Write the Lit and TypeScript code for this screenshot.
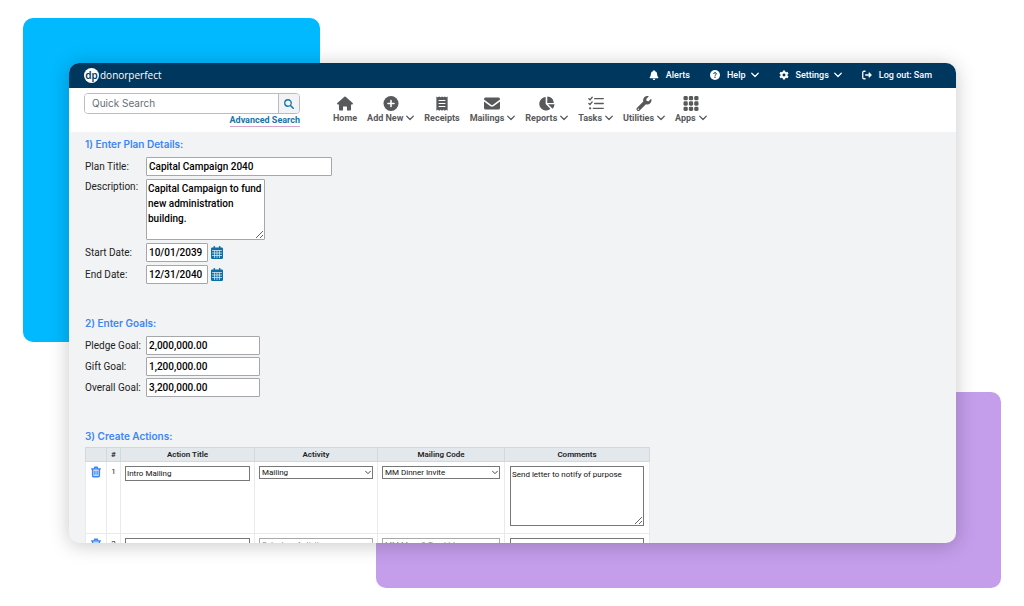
import { LitElement, html, svg, css, nothing, type SVGTemplateResult } from "lit";
import { customElement, property } from "lit/decorators.js";

const icons: Record<string, { box: string; art: SVGTemplateResult }> = {
  bell: {
    box: "0 0 448 512",
    art: svg`<path fill="currentColor" d="M224 512c35.32 0 63.97-28.65 63.97-64H160.03c0 35.35 28.65 64 63.97 64zm215.39-149.71c-19.32-20.76-55.47-51.99-55.47-154.29 0-77.7-54.48-139.9-127.94-155.16V32c0-17.67-14.32-32-31.98-32s-31.98 14.33-31.98 32v20.84C118.56 68.1 64.08 130.3 64.08 208c0 102.3-36.15 133.53-55.47 154.29-6 6.45-8.66 14.16-8.61 21.71.11 16.4 12.98 32 32.1 32h383.8c19.12 0 32-15.6 32.1-32 .05-7.55-2.61-15.27-8.61-21.71z"/>`,
  },
  help: {
    box: "0 0 16 16",
    art: svg`<circle cx="8" cy="8" r="8" fill="currentColor"/><path d="M5.800 6.300C5.900 4.900 6.800 4.200 8 4.200s2.200.7 2.200 1.900C10.200 7.700 8 7.500 8 9.300" fill="none" stroke="#00375f" stroke-width="1.600"/><circle cx="8" cy="11.500" r="1.100" fill="#00375f"/>`,
  },
  gear: {
    box: "0 0 24 24",
    art: svg`<path fill="currentColor" fill-rule="evenodd" d="M9.500 1h5l.7 3.400 1.900 1.100 3.300-1.200 2.500 4.400-2.600 2.200v2.200l2.600 2.200-2.500 4.400-3.300-1.200-1.900 1.100-.7 3.400h-5l-.7-3.400-1.900-1.100-3.300 1.200-2.500-4.400 2.600-2.200v-2.200L1.100 8.700l2.500-4.400 3.300 1.200 1.900-1.100zM12 8.500a3.500 3.500 0 1 0 0 7 3.500 3.500 0 0 0 0-7z"/>`,
  },
  logout: {
    box: "0 0 20 18",
    art: svg`<path d="M7 1.500H4A2.500 2.500 0 0 0 1.500 4v10A2.500 2.500 0 0 0 4 16.500h3M6.500 9H18M13.500 4.500 18 9l-4.500 4.500" fill="none" stroke="currentColor" stroke-width="2.600"/>`,
  },
  chevron: {
    box: "0 0 16 10",
    art: svg`<path d="M1.500 1.500 8 8l6.500-6.500" fill="none" stroke="currentColor" stroke-width="2.400" stroke-linecap="round" stroke-linejoin="round"/>`,
  },
  search: {
    box: "0 0 20 20",
    art: svg`<circle cx="8" cy="8" r="6.500" fill="none" stroke="currentColor" stroke-width="2.600"/><path d="m13 13 5.500 5.500" stroke="currentColor" stroke-width="3" stroke-linecap="round"/>`,
  },
  home: {
    box: "0 0 18 16",
    art: svg`<path fill="currentColor" d="M8.300.4a1.100 1.100 0 0 1 1.400 0l7.900 7.100c.7.600.3 1.700-.6 1.700h-1.200v5.600c0 .7-.5 1.200-1.200 1.200h-3.400v-4.600H6.800V16H3.400c-.7 0-1.200-.5-1.200-1.200V9.200H1c-.9 0-1.300-1.100-.6-1.700z"/>`,
  },
  add: {
    box: "0 0 16 16",
    art: svg`<circle cx="8" cy="8" r="8" fill="currentColor"/><path d="M8 4.800v6.400M4.800 8h6.400" stroke="#fff" stroke-width="1.700" stroke-linecap="round"/>`,
  },
  receipt: {
    box: "0 0 12 16",
    art: svg`<path fill="currentColor" d="M0 .4 1.500 1.300 3 .4l1.500.9L6 .4l1.500.9L9 .4l1.500.9L12 .4v15.200l-1.500-.9-1.500.9-1.500-.9-1.500.9-1.500-.9-1.500.9-1.500-.9-1.500.9z"/><path d="M2.400 4.900h7.200M2.400 8h7.200M2.400 11.100h7.200" stroke="#fff" stroke-width="1.100"/>`,
  },
  mail: {
    box: "0 0 16 12",
    art: svg`<path fill="currentColor" d="M1.500 0h13A1.500 1.500 0 0 1 16 1.500v.6L9 7.300a1.700 1.700 0 0 1-2 0L0 2.100v-.6A1.500 1.500 0 0 1 1.500 0zM0 4l6.100 4.500a3.200 3.200 0 0 0 3.800 0L16 4v6.500a1.500 1.500 0 0 1-1.500 1.500h-13A1.500 1.500 0 0 1 0 10.500z"/>`,
  },
  pie: {
    box: "0 0 18 16",
    art: svg`<path fill="currentColor" d="M7.500.8v7.700l5.300 5.400A7.500 7.500 0 1 1 7.500.8zM9.300 0a7.500 7.500 0 0 1 7.400 7.300H9.300zM10.200 8.900h7.300a7.300 7.300 0 0 1-2.300 4.900z"/>`,
  },
  tasks: {
    box: "0 0 18 16",
    art: svg`<path d="m1 2.700 1.300 1.200L4.700 1M1 7.900l1.300 1.200 2.400-2.900M7.500 2.600h9.700M7.500 8h9.700M6 13.400h11.200" fill="none" stroke="currentColor" stroke-width="1.500" stroke-linecap="round"/><circle cx="2.400" cy="13.400" r="1.300" fill="currentColor"/>`,
  },
  wrench: {
    box: "0 0 512 512",
    art: svg`<path fill="currentColor" d="M507.73 109.1c-2.24-9.03-13.54-12.09-20.12-5.51l-74.36 74.36-67.88-11.31-11.31-67.88 74.36-74.36c6.62-6.62 3.43-17.9-5.66-20.16-47.38-11.74-99.55.91-136.58 37.93-39.64 39.64-50.55 97.1-34.05 147.2L18.74 402.76c-24.99 24.99-24.99 65.51 0 90.5 24.99 24.99 65.51 24.99 90.5 0l213.21-213.21c50.12 16.71 107.47 5.68 147.37-34.22 37.07-37.07 49.7-89.32 37.91-136.73zM64 472c-13.25 0-24-10.75-24-24 0-13.26 10.75-24 24-24s24 10.74 24 24c0 13.25-10.75 24-24 24z"/>`,
  },
  grid: {
    box: "0 0 14 14",
    art: svg`${[0, 5, 10].flatMap((y) => [0, 5, 10].map((x) => svg`<rect x=${x} y=${y} width="4" height="4" rx="1.300" fill="currentColor"/>`))}`,
  },
  calendar: {
    box: "0 0 12 13",
    art: svg`<path fill="currentColor" d="M1.300 1.500h1.200V.8a.8.8 0 0 1 1.600 0v.7h3.800V.8a.8.8 0 0 1 1.600 0v.7h1.200A1.300 1.300 0 0 1 12 2.800v8.900a1.300 1.300 0 0 1-1.300 1.300H1.300A1.300 1.300 0 0 1 0 11.700V2.800a1.300 1.300 0 0 1 1.300-1.300z"/><path d="M1 4.500h10M1 7h10M1 9.500h10M3.600 4.300V12M6 4.300V12M8.400 4.300V12" stroke="#f2f3f5" stroke-width=".7"/>`,
  },
  trash: {
    box: "0 0 20 22",
    art: svg`<path d="M3.200 5h13.600v15H3.200z" fill="currentColor" opacity=".3"/><path d="M1.200 4.800h17.600M6.500 4.300 7.500 1.500h5l1 2.800M3.200 5v13.500a2 2 0 0 0 2 2h9.600a2 2 0 0 0 2-2V5" fill="none" stroke="currentColor" stroke-width="2.800" stroke-linecap="round"/><path d="M7.200 9v7.500M10 9v7.500M12.800 9v7.500" stroke="currentColor" stroke-width="1.500"/>`,
  },
};

@customElement("dp-icon")
class DpIcon extends LitElement {
  @property() name = "";
  static styles = css`
    :host { display: inline-flex; flex: none; width: 10px; height: 10px; }
    svg { width: 100%; height: 100%; display: block; }
  `;
  render() {
    const icon = icons[this.name];
    return html`<svg viewBox=${icon.box} aria-hidden="true">${icon.art}</svg>`;
  }
}

interface NavItem { label: string; icon: string; menu?: boolean; }

const utilityLinks: NavItem[] = [
  { label: "Alerts", icon: "bell" },
  { label: "Help", icon: "help", menu: true },
  { label: "Settings", icon: "gear", menu: true },
  { label: "Log out: Sam", icon: "logout" },
];

const mainLinks: NavItem[] = [
  { label: "Home", icon: "home" },
  { label: "Add New", icon: "add", menu: true },
  { label: "Receipts", icon: "receipt" },
  { label: "Mailings", icon: "mail", menu: true },
  { label: "Reports", icon: "pie", menu: true },
  { label: "Tasks", icon: "tasks", menu: true },
  { label: "Utilities", icon: "wrench", menu: true },
  { label: "Apps", icon: "grid", menu: true },
];

const dates = [
  { id: "start", label: "Start Date:", value: "10/01/2039" },
  { id: "end", label: "End Date:", value: "12/31/2040" },
];

const goals = [
  { id: "pledge", label: "Pledge Goal:", value: "2,000,000.00" },
  { id: "gift", label: "Gift Goal:", value: "1,200,000.00" },
  { id: "overall", label: "Overall Goal:", value: "3,200,000.00" },
];

const actions = [
  { title: "Intro Mailing", activity: "Mailing", code: "MM Dinner Invite", comments: "Send letter to notify of purpose", empty: false },
  { title: "", activity: "Select an Activity", code: "MM Mem & Trust Ltr", comments: "", empty: true },
];

@customElement("app-root")
class AppRoot extends LitElement {
  static styles = css`
    :host {
      display: block;
      position: relative;
      box-sizing: border-box;
      height: 100vh;
      min-height: 320px;
      padding: 63px 68px 63px 69px;
      background: #fff;
      overflow: hidden;
      font: 10px/15px Roboto, Inter, sans-serif;
      color: #222;
    }
    * { box-sizing: border-box; }
    input, textarea, select, button { font: inherit; color: inherit; margin: 0; border-radius: 0; }
    .blob { position: absolute; border-radius: 10px; }
    .blue { left: 23px; top: 18px; width: 29%; bottom: 264px; background: #00b9ff; }
    .violet { right: 23px; bottom: 18px; width: 61%; height: 196px; background: #c49deb; }
    .window {
      position: relative;
      display: flex;
      flex-direction: column;
      height: 100%;
      border-radius: 10px;
      overflow: hidden;
      background: #f2f3f5;
      box-shadow: 0 2px 20px rgba(0, 0, 0, 0.22);
    }
    a { color: inherit; text-decoration: none; }
    .topbar {
      flex: none;
      display: flex;
      align-items: center;
      justify-content: space-between;
      height: 25px;
      padding: 0 24px 1px 15px;
      background: #00375f;
      color: #fff;
    }
    .brand { display: flex; align-items: center; gap: 1px; font: 500 10px/14px "Open Sans", "Noto Sans", sans-serif; }
    .badge {
      width: 15px; height: 15px; border-radius: 50%;
      background: #fff; color: #00375f;
      display: flex; align-items: center; justify-content: center;
      font: 600 10px/12px "Noto Sans", sans-serif;
    }
    .utility { display: flex; gap: 20px; font-size: 9px; font-weight: 500; }
    .utility a { display: flex; align-items: center; gap: 7px; }
    .chev { width: 8px; height: 6px; }
    .utility .chev { margin-left: -2px; }
    .navbar {
      flex: none;
      display: flex;
      gap: 33px;
      height: 44px;
      padding: 5px 14px 0 15px;
      background: #fff;
    }
    .search { flex: none; width: 216px; display: flex; flex-direction: column; }
    .searchbox { display: flex; height: 21px; border: 1px solid #b9bcc0; border-radius: 4px; overflow: hidden; }
    .searchbox input { flex: 1; min-width: 0; border: 0; padding: 0 7px; background: #fff; outline: 0; font-family: Inter, sans-serif; }
    .searchbox input::placeholder { color: #6a6e73; opacity: 1; }
    .searchbox button {
      width: 21px; padding: 0; border: 0; border-left: 1px solid #b9bcc0;
      background: #f2f3f5; color: #1874a8;
      display: flex; align-items: center; justify-content: center;
    }
    .advanced {
      align-self: flex-end;
      font-size: 9px; line-height: 12px; font-weight: 700;
      color: #1874a8; border-bottom: 1px solid #d6a5cd;
    }
    .main { display: flex; align-items: flex-start; gap: 10px; padding-top: 3px; color: #58595b; }
    .main a { display: flex; flex-direction: column; align-items: center; gap: 1px; font-size: 9px; line-height: 12px; font-weight: 700; white-space: nowrap; }
    .main a > dp-icon { width: 16px; height: 15px; }
    .caption { display: flex; align-items: center; gap: 3px; }
    .content { flex: 1; min-height: 0; overflow: hidden; padding: 4px 16px 0; }
    h2 { margin: 0; font: 600 10px/16px Inter, sans-serif; color: #3d86f5; }
    .fields {
      display: grid;
      grid-template-columns: 61px 1fr;
      align-items: center;
      justify-items: start;
      margin: 5px 0 31px;
      white-space: nowrap;
    }
    .fields label { line-height: 15px; }
    .fields input, .fields textarea {
      border: 1px solid #a5a7aa; border-radius: 1px; background: #fff; color: #000;
      padding: 0 2px; height: 19px; outline: 0; font-weight: 500;
    }
    .plan { row-gap: 3px; }
    .goals { row-gap: 2px; }
    .fields .desc { height: 61px; width: 119px; padding: 1px; white-space: pre-wrap; display: block; resize: both; }
    .top { align-self: start; }
    .fields .title { width: 186px; }
    .fields .date { width: 62px; }
    .fields .goal { width: 114px; }
    .dategroup { display: flex; align-items: center; gap: 3px; }
    .dategroup button { border: 0; padding: 0; background: none; color: #0a70a8; display: flex; }
    .dategroup dp-icon { width: 12px; height: 13px; }
    .actions { border-collapse: collapse; table-layout: fixed; width: 565px; margin-top: 3px; font-size: 8px; line-height: 12px; }
    .c1 { width: 21px; } .c2 { width: 14px; } .c3 { width: 134px; } .c4 { width: 123px; } .c5 { width: 127px; }
    th { height: 14px; padding: 0; background: #e3e8ec; border: 1px solid #d3d8dc; font-weight: 600; color: #222; }
    td { height: 72px; padding: 4px 4px 0; background: #fff; border: 1px solid #e8ebee; vertical-align: top; }
    td.slim { padding: 4px 0 0; text-align: center; }
    .slim button { border: 0; padding: 0; background: none; color: #3d86f5; display: inline-flex; }
    .slim dp-icon { width: 10px; height: 12px; }
    .cell { display: block; width: 100%; border: 1px solid #777; background: #fff; color: #111; outline: 0; }
    input.cell { height: 15px; padding: 0 1px; }
    .pick { position: relative; display: block; }
    select.cell { height: 13px; appearance: none; padding: 0 14px 0 2px; line-height: 11px; }
    .pick dp-icon { position: absolute; right: 2px; top: 4px; width: 6px; height: 5px; color: #333; pointer-events: none; }
    .dim select { color: #8a8a8a; border-color: #aaa; }
    td.note { padding: 4px 5px 0; }
    textarea.cell { height: 60px; padding: 2px 1px; resize: both; }
  `;

  private chevron(menu?: boolean) {
    return menu ? html`<dp-icon class="chev" name="chevron"></dp-icon>` : nothing;
  }

  private picker(label: string, value: string, dim: boolean) {
    return html`<span class="pick ${dim ? "dim" : ""}">
      <select class="cell" aria-label=${label}><option>${value}</option></select>
      <dp-icon name="chevron"></dp-icon>
    </span>`;
  }

  render() {
    return html`
      <div class="blob blue"></div>
      <div class="blob violet"></div>
      <div class="window">
        <header class="topbar">
          <a class="brand" href="#"><span class="badge">dp</span><span>donorperfect</span></a>
          <nav class="utility" aria-label="Account">
            ${utilityLinks.map((l) => html`<a href="#"><dp-icon name=${l.icon}></dp-icon><span>${l.label}</span>${this.chevron(l.menu)}</a>`)}
          </nav>
        </header>
        <div class="navbar">
          <form class="search" role="search">
            <div class="searchbox">
              <input type="text" placeholder="Quick Search" aria-label="Quick Search" />
              <button type="button" aria-label="Search"><dp-icon name="search"></dp-icon></button>
            </div>
            <a class="advanced" href="#">Advanced Search</a>
          </form>
          <nav class="main" aria-label="Main">
            ${mainLinks.map((l) => html`<a href="#"><dp-icon name=${l.icon}></dp-icon><span class="caption">${l.label}${this.chevron(l.menu)}</span></a>`)}
          </nav>
        </div>
        <main class="content">
          <h2>1) Enter Plan Details:</h2>
          <div class="fields plan">
            <label for="title">Plan Title:</label>
            <input id="title" class="title" type="text" value="Capital Campaign 2040" />
            <label class="top" for="desc">Description:</label>
            <textarea id="desc" class="desc" .value=${"Capital Campaign to fund new administration building."}></textarea>
            ${dates.map((d) => html`
              <label for=${d.id}>${d.label}</label>
              <div class="dategroup">
                <input id=${d.id} class="date" type="text" value=${d.value} />
                <button type="button" aria-label="Pick date"><dp-icon name="calendar"></dp-icon></button>
              </div>`)}
          </div>
          <h2>2) Enter Goals:</h2>
          <div class="fields goals">
            ${goals.map((g) => html`
              <label for=${g.id}>${g.label}</label>
              <input id=${g.id} class="goal" type="text" value=${g.value} />`)}
          </div>
          <h2>3) Create Actions:</h2>
          <table class="actions">
            <colgroup><col class="c1" /><col class="c2" /><col class="c3" /><col class="c4" /><col class="c5" /><col /></colgroup>
            <thead>
              <tr><th></th><th>#</th><th>Action Title</th><th>Activity</th><th>Mailing Code</th><th>Comments</th></tr>
            </thead>
            <tbody>
              ${actions.map((a, i) => html`<tr>
                <td class="slim"><button type="button" aria-label="Delete action"><dp-icon name="trash"></dp-icon></button></td>
                <td class="slim">${i + 1}</td>
                <td><input class="cell" type="text" aria-label="Action Title" value=${a.title} /></td>
                <td>${this.picker("Activity", a.activity, a.empty)}</td>
                <td>${this.picker("Mailing Code", a.code, a.empty)}</td>
                <td class="note"><textarea class="cell" aria-label="Comments" .value=${a.comments}></textarea></td>
              </tr>`)}
            </tbody>
          </table>
        </main>
      </div>
    `;
  }
}
